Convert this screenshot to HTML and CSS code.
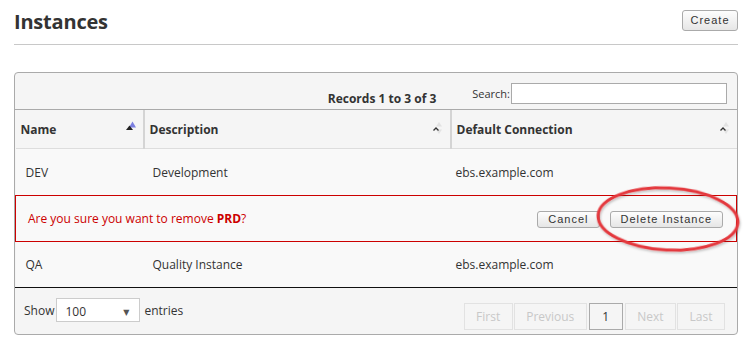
FILE: index.html
```html
<!DOCTYPE HTML>
<html>
<head>
<title>Instances</title>
<link rel="stylesheet" href="styles.css">
</head>
<body>
  <div class="page">
    <div class="page-head">
      <h1>Instances</h1>
      <button class="btn create">Create</button>
    </div>

    <div class="table-wrap">
      <div class="toolbar">
        <div class="info">Records 1 to 3 of 3</div>
        <label class="search">Search:<input type="text" /></label>
      </div>

      <table class="grid">
        <thead>
          <tr>
            <th class="col-name">Name
              <svg class="sort sorted" width="12" height="12" viewBox="0 0 12 12"><path d="M3 7.5 L6.5 1.5 L10 7.5 Z" fill="#7b7fe0"/><path d="M0 10 L3.5 5.5 L7 10 Z" fill="#222"/></svg>
            </th>
            <th class="col-desc">Description
              <svg class="sort" width="12" height="12" viewBox="0 0 12 12"><path d="M7 0 L10 4.5 L4 4.5 Z" fill="#e2e2e2"/><path d="M7 12 L10 7.5 L4 7.5 Z" fill="#e2e2e2"/><path d="M1.5 8.5 L4 6 L6.5 8.5" fill="none" stroke="#333" stroke-width="1.3"/></svg>
            </th>
            <th class="col-conn">Default Connection
              <svg class="sort" width="12" height="12" viewBox="0 0 12 12"><path d="M7 0 L10 4.5 L4 4.5 Z" fill="#e2e2e2"/><path d="M7 12 L10 7.5 L4 7.5 Z" fill="#e2e2e2"/><path d="M1.5 8.5 L4 6 L6.5 8.5" fill="none" stroke="#333" stroke-width="1.3"/></svg>
            </th>
          </tr>
        </thead>
        <tbody>
          <tr class="first">
            <td>DEV</td>
            <td>Development</td>
            <td>ebs.example.com</td>
          </tr>
          <tr class="confirm">
            <td colspan="3">
              <div class="confirm-body">
                <span>Are you sure you want to remove <b>PRD</b>?</span>
                <span class="confirm-actions">
                  <button class="btn">Cancel</button>
                  <button class="btn">Delete Instance</button>
                </span>
              </div>
            </td>
          </tr>
          <tr>
            <td>QA</td>
            <td>Quality Instance</td>
            <td>ebs.example.com</td>
          </tr>
        </tbody>
      </table>

      <div class="footer">
        <div class="length">Show
          <span class="select">100<span class="arrow">&#9660;</span></span>
          entries</div>
        <div class="paging">
          <span class="pg disabled">First</span>
          <span class="pg disabled">Previous</span>
          <span class="pg current">1</span>
          <span class="pg disabled">Next</span>
          <span class="pg disabled">Last</span>
        </div>
      </div>
    </div>

    <!-- highlight drawn over the screenshot -->
    <svg class="highlight" width="170" height="84" viewBox="0 0 170 84">
      <defs>
        <filter id="soft" x="-10%" y="-20%" width="120%" height="140%">
          <feDropShadow dx="1" dy="1.5" stdDeviation="1.2" flood-color="#000" flood-opacity="0.25"/>
        </filter>
      </defs>
      <ellipse cx="78" cy="41" rx="70" ry="31" transform="rotate(3 78 41)" fill="none" stroke="#e4393e" stroke-width="3" filter="url(#soft)"/>
    </svg>
  </div>
</body>
</html>
```

FILE: styles.css
```css
body {
  margin: 0;
  font-family: "Open Sans", "DejaVu Sans", sans-serif;
  color: #333;
  background: #fff;
}

.page {
  position: relative;
  padding: 8px 18px 0 14px;
}

.page-head {
  display: flex;
  justify-content: space-between;
  align-items: flex-start;
  height: 36px;
  border-bottom: 1px solid #c8c8c8;
}

h1 {
  margin: 0;
  font-size: 20px;
  line-height: 28px;
  font-weight: bold;
  color: #333;
  letter-spacing: -0.2px;
}

.btn {
  font-family: "Liberation Sans", Arial, sans-serif;
  font-size: 11px;
  letter-spacing: 1px;
  color: #333;
  background: linear-gradient(#fdfdfd, #e6e6e6);
  border: 1px solid #aaa;
  border-radius: 3px;
  height: 17px;
  padding: 0 10px;
  line-height: 15px;
}

.create {
  margin-top: 2px;
  height: 21px;
  width: 56px;
  padding: 0;
}

.table-wrap {
  margin-top: 27px;
  border: 1px solid #aaa;
  border-radius: 4px;
  background: #f5f5f5;
  overflow: hidden;
}

.toolbar {
  display: flex;
  justify-content: flex-end;
  align-items: flex-start;
  height: 36px;
  padding-right: 10px;
  border-bottom: 1px solid #aaa;
}

.info {
  font-size: 12px;
  font-weight: bold;
  margin-top: 17px;
}

.search {
  display: flex;
  align-items: center;
  font-size: 11px;
  margin: 10px 0 0 36px;
}

.search input {
  width: 214px;
  height: 19px;
  padding: 0;
  margin: 0 0 0 1px;
  border: 1px solid #aaa;
  background: #fff;
}

.grid {
  width: 100%;
  border-collapse: collapse;
  table-layout: fixed;
  font-size: 12px;
}

.grid th {
  position: relative;
  height: 38px;
  padding: 0 0 0 5px;
  text-align: left;
  font-weight: bold;
  background: #f5f5f5;
  border-bottom: 1px solid #ddd;
  border-right: 2px solid #d4d4d4;
}

.grid th:last-child {
  border-right: none;
}

.col-name { width: 122px; }
.col-desc { width: 300px; padding-left: 3px; }

.sort {
  position: absolute;
  right: 6px;
  top: 12px;
}

.sort.sorted {
  right: 5px;
  top: 10px;
}

.grid td {
  height: 45px;
  padding: 0 0 0 10px;
  background: #f9f9f9;
}

.grid .first td {
  height: 46px;
}

.grid td:nth-child(2) { padding-left: 9px; }
.grid td:nth-child(3) { padding-left: 5px; }

.confirm td {
  height: 45px;
  padding: 0;
  border: 1px solid #c00;
}

.confirm-body {
  display: flex;
  justify-content: space-between;
  align-items: center;
  padding: 0 13px 0 12px;
  color: #c00;
}

.confirm-body b {
  color: #c00;
}

.confirm-actions {
  display: flex;
  gap: 10px;
  margin-top: 1px;
}

.footer {
  display: flex;
  justify-content: space-between;
  align-items: flex-start;
  height: 46px;
  padding: 0 12px 0 9px;
  border-top: 1px solid #111;
  font-size: 12px;
}

.length {
  display: flex;
  align-items: center;
  margin-top: 10px;
  gap: 2px;
}

.select {
  display: flex;
  justify-content: space-between;
  align-items: center;
  width: 64px;
  height: 20px;
  padding: 2px 10px 0 8px;
  margin-right: 2px;
  background: #fff;
  border: 1px solid #ccc;
}

.arrow {
  font-size: 8px;
  color: #555;
}

.paging {
  display: flex;
  gap: 1px;
  margin-top: 15px;
}

.pg {
  height: 25px;
  line-height: 25px;
  padding: 0 11.5px;
  border: 1px solid #e2e2e2;
  color: #c8c8c8;
}

.pg.current {
  border-color: #aaa;
  color: #333;
  padding: 0 12.5px;
  margin: 0 1px;
}

.highlight {
  position: absolute;
  left: 590px;
  top: 178px;
}
```
